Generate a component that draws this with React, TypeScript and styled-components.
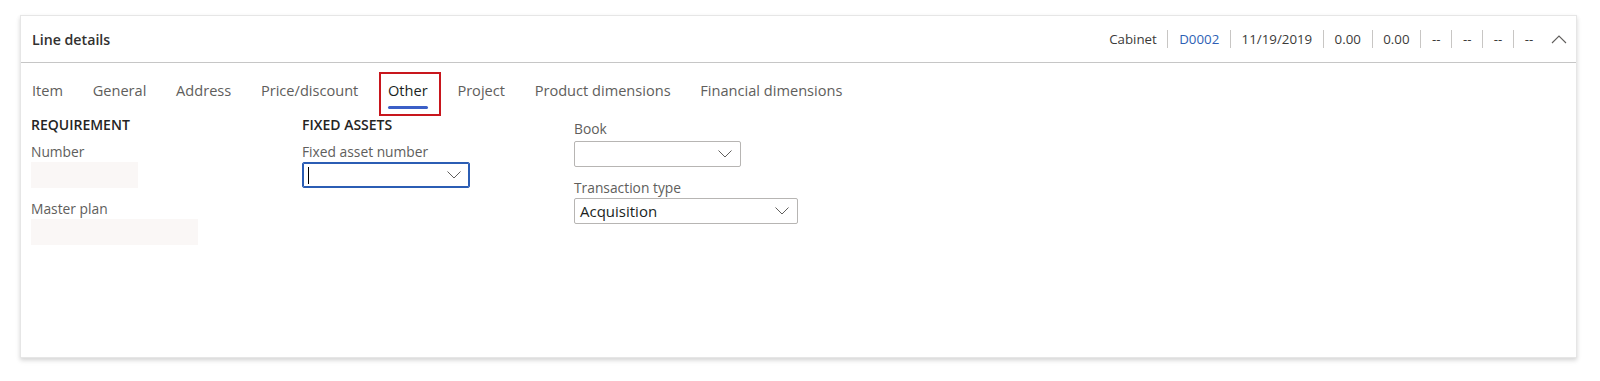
import React from "react";
import styled, { createGlobalStyle } from "styled-components";

const Global = createGlobalStyle`
  html, body { margin: 0; padding: 0; background: #ffffff; }
  body { font-family: "Open Sans", "Noto Sans", Arial, sans-serif; color: #323130; }
`;

const Page = styled.div`
  padding: 15px 23px 0 20px;
  height: 381px;
  box-sizing: border-box;
`;

const Panel = styled.section`
  height: 343px;
  background: #fff;
  border: 1px solid #e6e6e6;
  box-shadow: 0 1.5px 4px rgba(0, 0, 0, 0.12), 0 3px 6px rgba(0,0,0,0.06);
  box-sizing: border-box;
  display: flex;
  flex-direction: column;
`;

const Header = styled.header`
  height: 47px;
  box-sizing: border-box;
  border-bottom: 1px solid #c6c6c6;
  display: flex;
  align-items: center;
  padding: 0 7px 0 11px;
`;

const Title = styled.h2`
  margin: 0;
  font-size: 14.2px;
  font-weight: 600;
  color: #323130;
  flex: 1;
`;

const Summary = styled.div`
  display: flex;
  align-items: center;
  font-size: 13.3px;
  color: #3b3a39;
`;

const SummaryItem = styled.span<{ $link?: boolean }>`
  color: ${(p) => (p.$link ? "#2e5fb5" : "#3b3a39")};
  padding: 0 10.7px;
  line-height: 18px;
  & + & { border-left: 1px solid #c8c6c4; }
`;

const Chevron = styled.span`
  display: flex;
  margin-left: 5px;
  width: 20px;
  justify-content: center;
`;

const TabRow = styled.nav`
  display: flex;
  gap: 9.7px;
  padding: 9px 0 0 1px;
`;

const Tab = styled.div<{ $active?: boolean }>`
  position: relative;
  height: 44px;
  box-sizing: border-box;
  padding: 0 10px 8px;
  display: flex;
  align-items: center;
  font-size: 14.6px;
  color: ${(p) => (p.$active ? "#201f1e" : "#605e5c")};
  font-weight: ${(p) => (p.$active ? 500 : 400)};
  &::before {
    content: "";
    display: ${(p) => (p.$active ? "block" : "none")};
    position: absolute;
    left: 1px;
    right: -3px;
    top: 0;
    bottom: 0;
    border: 2.5px solid #c8161d;
  }
  &::after {
    content: "";
    display: ${(p) => (p.$active ? "block" : "none")};
    position: absolute;
    left: 10px;
    right: 10px;
    bottom: 7px;
    height: 3px;
    border-radius: 2px;
    background: #3b5fc7;
  }
`;

const Body = styled.div`
  display: flex;
  padding-left: 10px;
`;

const Column = styled.div<{ $width: number; $top?: number }>`
  width: ${(p) => p.$width}px;
  padding-top: ${(p) => p.$top ?? 0}px;
  display: flex;
  flex-direction: column;
`;

const GroupTitle = styled.div`
  font-size: 14px;
  font-weight: 600;
  line-height: 18px;
  color: #252423;
  text-transform: uppercase;
  margin-bottom: 8px;
`;

const Label = styled.label`
  font-size: 13.8px;
  line-height: 20px;
  color: #605e5c;
`;

const ReadOnly = styled.div<{ $w: number }>`
  width: ${(p) => p.$w}px;
  height: 26px;
  background: #faf7f6;
  margin-bottom: 11px;
`;

const Select = styled.div<{ $w: number; $focus?: boolean; $gap?: number }>`
  width: ${(p) => p.$w}px;
  height: 26px;
  box-sizing: border-box;
  border: 1px solid ${(p) => (p.$focus ? "#2b5db4" : "#b7b5b3")};
  box-shadow: ${(p) => (p.$focus ? "inset 0 0 0 1px #2b5db4" : "none")};
  border-radius: 2px;
  display: flex;
  align-items: center;
  padding: 0 8px 0 5px;
  margin-top: ${(p) => p.$gap ?? 0}px;
  margin-bottom: 11px;
  font-size: 15px;
  color: #201f1e;
`;

const SelectValue = styled.span`
  flex: 1;
  display: flex;
  align-items: center;
`;

const Caret = styled.span`
  width: 1px;
  height: 17px;
  background: #000;
`;

const Down = () => (
  <svg width="14" height="8" viewBox="0 0 14 8">
    <path d="M0.5 0.5 L7 7 L13.5 0.5" fill="none" stroke="#605e5c" strokeWidth="1" />
  </svg>
);

const Up = () => (
  <svg width="16" height="9" viewBox="0 0 16 9">
    <path d="M1 8 L8 1 L15 8" fill="none" stroke="#605e5c" strokeWidth="1.1" />
  </svg>
);

const tabs = ["Item", "General", "Address", "Price/discount", "Other", "Project", "Product dimensions", "Financial dimensions"];
const summary = ["Cabinet", "D0002", "11/19/2019", "0.00", "0.00", "--", "--", "--", "--"];

export default function App() {
  return (
    <>
      <Global />
      <Page>
        <Panel>
          <Header>
            <Title>Line details</Title>
            <Summary>
              {summary.map((s, i) => (
                <SummaryItem key={i} $link={s === "D0002"}>{s}</SummaryItem>
              ))}
              <Chevron><Up /></Chevron>
            </Summary>
          </Header>
          <TabRow>
            {tabs.map((t) => (
              <Tab key={t} $active={t === "Other"}>{t}</Tab>
            ))}
          </TabRow>
          <Body>
            <Column $width={271}>
              <GroupTitle>Requirement</GroupTitle>
              <Label>Number</Label>
              <ReadOnly $w={107} />
              <Label>Master plan</Label>
              <ReadOnly $w={167} />
            </Column>
            <Column $width={272}>
              <GroupTitle>Fixed assets</GroupTitle>
              <Label>Fixed asset number</Label>
              <Select $w={168} $focus>
                <SelectValue><Caret /></SelectValue>
                <Down />
              </Select>
            </Column>
            <Column $width={300} $top={3}>
              <Label>Book</Label>
              <Select $w={167} $gap={2}>
                <SelectValue />
                <Down />
              </Select>
              <Label>Transaction type</Label>
              <Select $w={224}>
                <SelectValue>Acquisition</SelectValue>
                <Down />
              </Select>
            </Column>
          </Body>
        </Panel>
      </Page>
    </>
  );
}
